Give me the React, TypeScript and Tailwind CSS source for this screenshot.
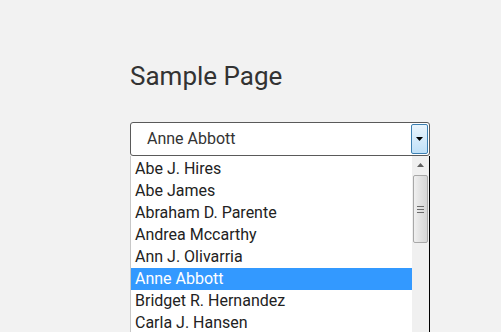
import React from 'react'

const people = [
  'Abe J. Hires',
  'Abe James',
  'Abraham D. Parente',
  'Andrea Mccarthy',
  'Ann J. Olivarria',
  'Anne Abbott',
  'Bridget R. Hernandez',
  'Carla J. Hansen',
]

export default function App() {
  const selected = 'Anne Abbott'

  return (
    <div className="h-[332px] overflow-hidden bg-[#f2f2f2] font-['Roboto',sans-serif] text-[#333]">
      <div className="pl-[130px] pt-[60px]">
        <h1 className="text-[26px] leading-[32px]">Sample Page</h1>

        <div className="mt-[30px] w-[300px]">
          {/* closed select */}
          <div className="flex h-[34px] items-stretch rounded-[3px] border border-[#5a5a5a] bg-white">
            <div className="flex flex-1 items-center pl-4 text-[16px]">{selected}</div>
            <div className="my-[1px] mr-[1px] flex w-[17px] items-center justify-center rounded-[2px] border border-[#3c7fb1] bg-gradient-to-b from-[#eaf5fd] to-[#bfe0f8]">
              <svg width="7" height="4" viewBox="0 0 7 4">
                <path d="M0 0h7L3.5 4z" fill="#000" />
              </svg>
            </div>
          </div>

          {/* open list */}
          <div className="flex h-[180px] border-l border-r border-l-[#c8c8c8] border-r-black bg-white">
            <ul className="flex-1 pt-[2px]">
              {people.map((p) => (
                <li
                  key={p}
                  className={
                    'h-[22px] pl-1 text-[16px] leading-[22px] ' +
                    (p === selected ? 'bg-[#3399ff] text-white' : 'text-[#222]')
                  }
                >
                  {p}
                </li>
              ))}
            </ul>
            <div className="flex w-[17px] flex-col items-center bg-[#f0f0f0]">
              <div className="flex h-[17px] w-full items-center justify-center">
                <svg width="7" height="4" viewBox="0 0 7 4">
                  <path d="M3.5 0L7 4H0z" fill="#606060" />
                </svg>
              </div>
              <div className="mt-[2px] flex h-[68px] w-[15px] items-center justify-center rounded-[2px] border border-[#a8a8a8] bg-gradient-to-r from-[#f0f0f0] via-[#e2e2e2] to-[#d6d6d6]">
                <svg width="7" height="7" viewBox="0 0 7 7">
                  <path d="M0 0.5h7M0 3.5h7M0 6.5h7" stroke="#6a6a6a" strokeWidth="1" />
                </svg>
              </div>
            </div>
          </div>
        </div>
      </div>
    </div>
  )
}
